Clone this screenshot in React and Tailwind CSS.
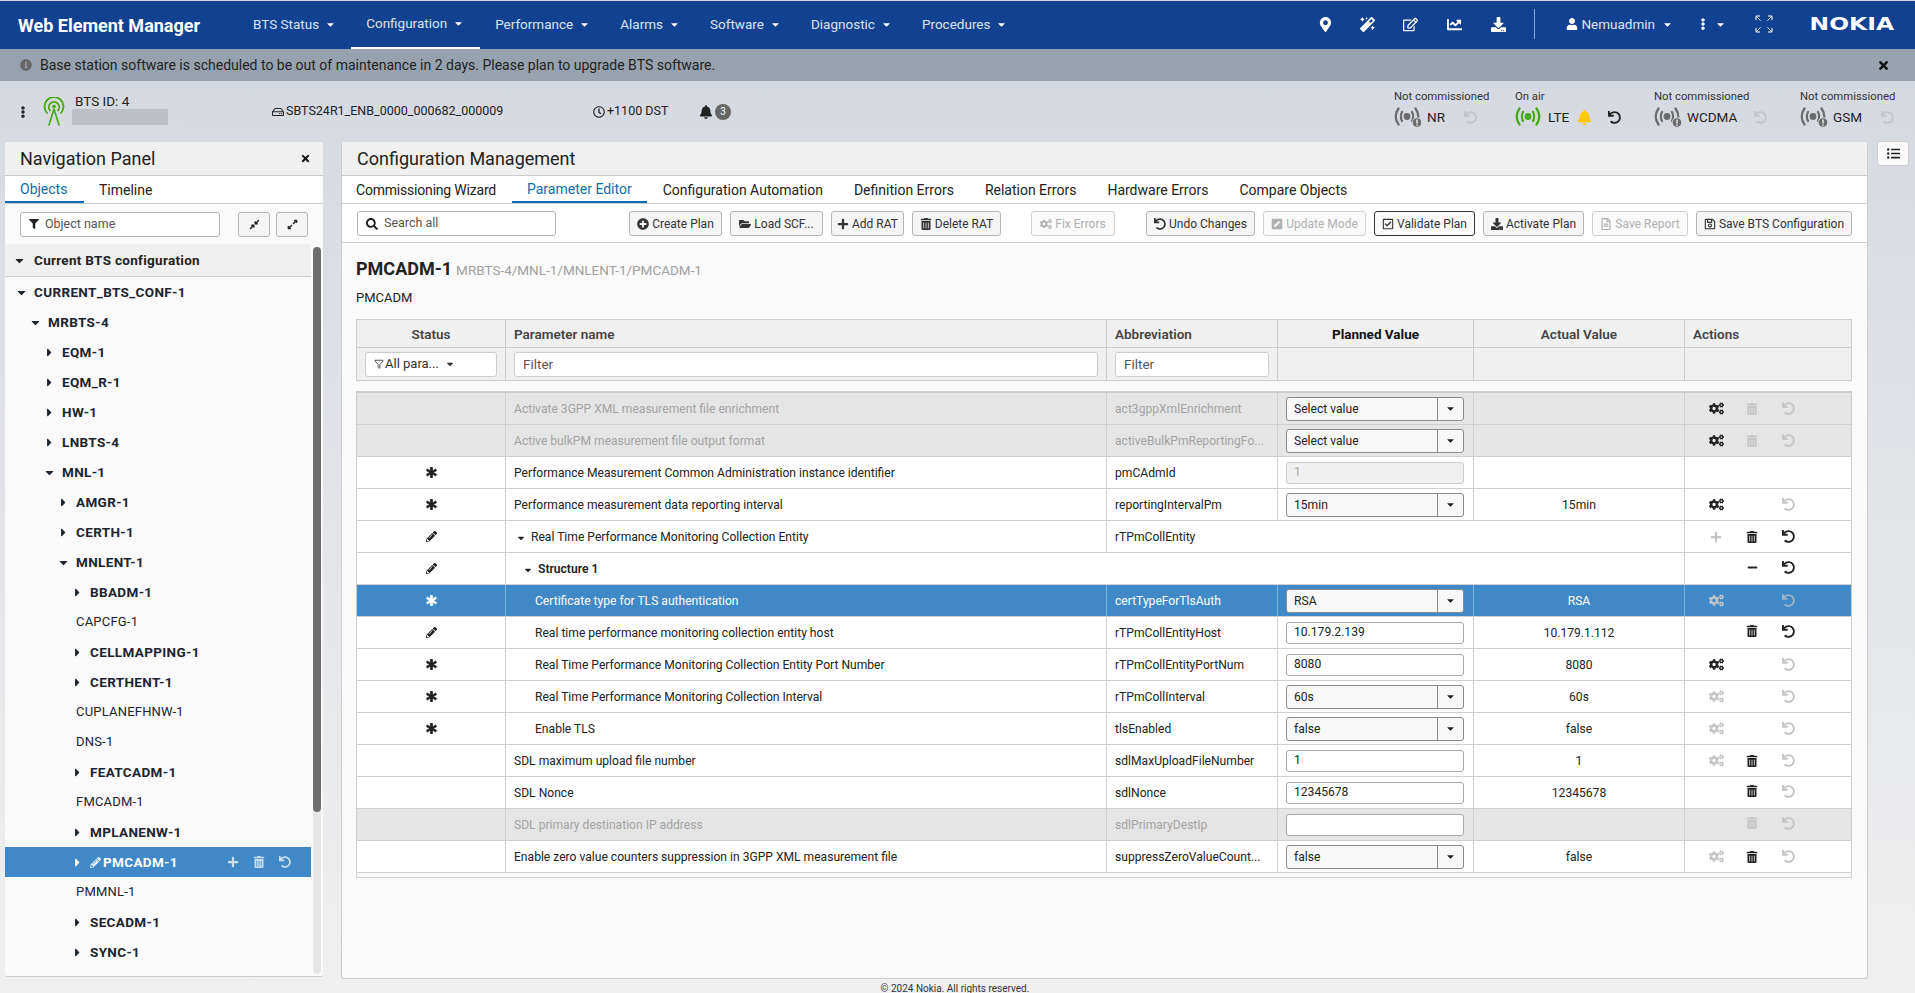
import {
  FaAsterisk, FaBell, FaCaretDown, FaCaretRight, FaChartLine, FaCogs, FaCompressAlt, FaDownload,
  FaEllipsisV, FaExpandAlt, FaFilter, FaFolderOpen, FaInfoCircle, FaListUl, FaMagic, FaMapMarkerAlt,
  FaMinus, FaPenSquare, FaPencilAlt, FaPlus, FaPlusCircle, FaRegCheckSquare, FaRegClock, FaRegEdit,
  FaRegFileAlt, FaRegHdd, FaRegSave, FaSearch, FaTimes, FaTrashAlt, FaUndo, FaUser,
} from 'react-icons/fa'
import { Filter } from 'lucide-react'

const NAV = [
  ['BTS Status', 'pl-[16px] pr-[15px]'],
  ['Configuration', 'pl-[15px] pr-[16px]', true],
  ['Performance', 'pl-[15px] pr-[15px]'],
  ['Alarms', 'pl-[15px] pr-[15px]'],
  ['Software', 'pl-[15px] pr-[15px]'],
  ['Diagnostic', 'pl-[15px] pr-[15px]'],
  ['Procedures', 'pl-[15px] pr-[15px]'],
]

const TREE = [
  [0, 'CURRENT_BTS_CONF-1', 'open'],
  [1, 'MRBTS-4', 'open'],
  [2, 'EQM-1', 'closed'],
  [2, 'EQM_R-1', 'closed'],
  [2, 'HW-1', 'closed'],
  [2, 'LNBTS-4', 'closed'],
  [2, 'MNL-1', 'open'],
  [3, 'AMGR-1', 'closed'],
  [3, 'CERTH-1', 'closed'],
  [3, 'MNLENT-1', 'open'],
  [4, 'BBADM-1', 'closed'],
  [3, 'CAPCFG-1', 'leaf'],
  [4, 'CELLMAPPING-1', 'closed'],
  [4, 'CERTHENT-1', 'closed'],
  [3, 'CUPLANEFHNW-1', 'leaf'],
  [3, 'DNS-1', 'leaf'],
  [4, 'FEATCADM-1', 'closed'],
  [3, 'FMCADM-1', 'leaf'],
  [4, 'MPLANENW-1', 'closed'],
  [4, 'PMCADM-1', 'selected'],
  [3, 'PMMNL-1', 'leaf'],
  [4, 'SECADM-1', 'closed'],
  [4, 'SYNC-1', 'closed'],
  [4, 'TAC-1', 'closed'],
]

const TABS = ['Commissioning Wizard', 'Parameter Editor', 'Configuration Automation', 'Definition Errors', 'Relation Errors', 'Hardware Errors', 'Compare Objects']

// g/t/u = gears, trash, undo: 1 dark, 0 faded, null nothing
const ROWS = [
  { name: 'Activate 3GPP XML measurement file enrichment', abbr: 'act3gppXmlEnrichment', select: 'Select value', off: true, g: 1, t: 0, u: 0 },
  { name: 'Active bulkPM measurement file output format', abbr: 'activeBulkPmReportingFo...', select: 'Select value', off: true, g: 1, t: 0, u: 0 },
  { status: 'star', name: 'Performance Measurement Common Administration instance identifier', abbr: 'pmCAdmId', locked: '1' },
  { status: 'star', name: 'Performance measurement data reporting interval', abbr: 'reportingIntervalPm', select: '15min', actual: '15min', g: 1, u: 0 },
  { status: 'pen', name: 'Real Time Performance Monitoring Collection Entity', abbr: 'rTPmCollEntity', caret: 1, wide: 'abbr', plus: 0, t: 1, u: 1 },
  { status: 'pen', name: 'Structure 1', caret: 2, wide: 'name', minus: true, u: 1, lift: true },
  { status: 'star', name: 'Certificate type for TLS authentication', abbr: 'certTypeForTlsAuth', select: 'RSA', actual: 'RSA', nested: true, sel: true, g: 0, u: 0 },
  { status: 'pen', name: 'Real time performance monitoring collection entity host', abbr: 'rTPmCollEntityHost', input: '10.179.2.139', actual: '10.179.1.112', nested: true, t: 1, u: 1, lift: true },
  { status: 'star', name: 'Real Time Performance Monitoring Collection Entity Port Number', abbr: 'rTPmCollEntityPortNum', input: '8080', actual: '8080', nested: true, g: 1, u: 0 },
  { status: 'star', name: 'Real Time Performance Monitoring Collection Interval', abbr: 'rTPmCollInterval', select: '60s', actual: '60s', nested: true, g: 0, u: 0 },
  { status: 'star', name: 'Enable TLS', abbr: 'tlsEnabled', select: 'false', actual: 'false', nested: true, g: 0, u: 0 },
  { name: 'SDL maximum upload file number', abbr: 'sdlMaxUploadFileNumber', input: '1', actual: '1', g: 0, t: 1, u: 0 },
  { name: 'SDL Nonce', abbr: 'sdlNonce', input: '12345678', actual: '12345678', t: 1, u: 0, lift: true },
  { name: 'SDL primary destination IP address', abbr: 'sdlPrimaryDestIp', input: '', off: true, t: 0, u: 0, lift: true },
  { name: 'Enable zero value counters suppression in 3GPP XML measurement file', abbr: 'suppressZeroValueCount...', select: 'false', actual: 'false', g: 0, t: 1, u: 0 },
]

const GRID = 'grid grid-cols-[149px_601px_171px_196px_211px_167px]'

function SignalIcon({ green }) {
  const color = green ? '#45a80f' : '#6b6b6b'
  return (
    <svg width="28" height="22" viewBox="0 0 28 22" fill="none" stroke={color} strokeWidth="2.2" strokeLinecap="round">
      <path d="M4.5 2.5 C1 7.5 1 13.5 4.5 18.5" />
      <path d="M8 6 C6.5 9 6.5 12 8 15" />
      <circle cx="13" cy="10.5" r="3.4" fill={color} stroke="none" />
      <path d="M18 6 C19.5 9 19.5 12 18 15" />
      <path d="M21.5 2.5 C25 7.5 25 13.5 21.5 18.5" />
      {!green && <circle cx="23" cy="16.5" r="4.8" fill={color} stroke="#d4d8e0" strokeWidth="1" />}
      {!green && <path d="M23 14v3M23 19v.2" stroke="#fff" strokeWidth="1.3" />}
    </svg>
  )
}

function Antenna() {
  return (
    <svg width="22" height="30" viewBox="0 0 22 30" fill="none" stroke="#45a80f" strokeWidth="1.8" strokeLinecap="round">
      <path d="M4 16 A9.5 9.5 0 1 1 18 16" />
      <path d="M7 13.5 A5.2 5.2 0 1 1 15 13.5" />
      <circle cx="11" cy="9.5" r="1.8" fill="#45a80f" stroke="none" />
      <path d="M11 12 L6 28 M11 12 L16 28" strokeWidth="1.6" />
    </svg>
  )
}

function ExpandCorners() {
  return (
    <svg width="18" height="18" viewBox="0 0 18 18" fill="none" stroke="#fff" strokeWidth="1">
      <path d="M1 5V1h4M1 1l4.5 4.5" />
      <path d="M17 5V1h-4M17 1l-4.5 4.5" />
      <path d="M1 13v4h4M1 17l4.5-4.5" />
      <path d="M17 13v4h-4M17 17l-4.5-4.5" />
    </svg>
  )
}

function RatStatus({ label, rat, green, className, ratWidth, children }) {
  return (
    <div className={className}>
      <div className="text-[11.3px] leading-[16px] text-[#333]">{label}</div>
      <div className="flex items-center h-[22px] mt-[1px]">
        <SignalIcon green={green} />
        <span className={`text-[13.5px] text-[#222] ml-[5px] ${ratWidth}`}>{rat}</span>
        {children}
      </div>
    </div>
  )
}

function ToolButton({ icon: Icon, label, width, disabled, active }) {
  let tone = 'bg-[#f5f5f5] border-[#b5b5b5] text-[#333]'
  if (disabled) tone = 'bg-[#fafafa] border-[#d0d0d0] text-[#b0b0b0]'
  if (active) tone = 'bg-[#fafafa] border-[#333] text-[#333]'
  return (
    <button className={`h-[25px] rounded-[3px] border text-[12px] flex items-center justify-center gap-[3px] whitespace-nowrap shrink-0 ${width} ${tone}`}>
      <Icon className="text-[12px]" />
      {label}
    </button>
  )
}

function TreeRow({ level, label, kind }) {
  const selected = kind === 'selected'
  const leaf = kind === 'leaf'
  const pad = ['pl-[12px]', 'pl-[26px]', 'pl-[40px]', 'pl-[54px]', 'pl-[68px]'][level]
  return (
    <div className={`h-[30px] shrink-0 flex items-center ${pad} ${selected ? 'bg-[#4088c8] text-white' : 'text-[#1c2430]'} ${leaf ? 'text-[13px] tracking-[0.2px]' : 'text-[13.5px] tracking-[0.35px] font-bold'}`}>
      <span className="w-[17px] shrink-0 flex">
        {kind === 'open' && <FaCaretDown className="text-[13px] -ml-[2px]" />}
        {(kind === 'closed' || selected) && <FaCaretRight className="text-[13px] -ml-[2px]" />}
      </span>
      {selected && <FaPencilAlt className="text-[11px] mr-[2px] text-[#e4eef7]" />}
      <span>{label}</span>
      {selected && (
        <span className="ml-auto flex items-center gap-[14px] pr-[20px] text-[#c9ddef] text-[12px]">
          <FaPlus />
          <FaTrashAlt />
          <FaUndo />
        </span>
      )}
    </div>
  )
}

function ActionIcon({ icon: Icon, on, size }) {
  return (
    <span className="w-[36px] flex justify-center">
      {on !== undefined && <Icon className={`${size} ${on ? 'text-[#222]' : 'text-[#c4c4c4]'}`} />}
    </span>
  )
}

function PlannedCell({ row }) {
  if (row.select) {
    return (
      <div className="w-full h-[24px] rounded-[3px] border border-[#8a8a8a] bg-[#f8f8f8] flex items-center text-[12.1px] text-[#222]">
        <span className="flex-1 pl-[7px] pt-[2px]">{row.select}</span>
        <span className="w-[26px] h-full border-l border-[#8a8a8a] flex items-center justify-center">
          <FaCaretDown className="text-[11px]" />
        </span>
      </div>
    )
  }
  if (row.locked) {
    return <div className="w-full h-[22px] rounded-[3px] border border-[#ccc] bg-[#f0f0f0] pl-[7px] flex items-center text-[12.1px] text-[#aaa]">{row.locked}</div>
  }
  return <div className="w-full h-[22px] rounded-[3px] border border-[#a8a8a8] bg-white pl-[7px] flex items-center text-[12.1px] text-[#222]">{row.input}</div>
}

function TableRow({ row }) {
  const line = row.sel ? 'border-[#7fb0da]' : 'border-[#d0d0d0]'
  const cell = `h-full border-r ${line} flex items-center min-w-0`
  let bg = 'bg-white text-[#222]'
  if (row.off) bg = 'bg-[#e5e5e5] text-[#a3a3a3]'
  if (row.sel) bg = 'bg-[#4088c8] text-white'
  const namePad = row.nested ? 'pl-[29px]' : row.caret === 2 ? 'pl-[15px]' : 'pl-[8px]'
  const statusTone = row.sel ? 'text-white' : 'text-[#222]'
  return (
    <div className={`${GRID} h-[32px] border-b border-[#d0d0d0] text-[12.1px] ${bg}`}>
      <div className={`${cell} justify-center`}>
        {row.status === 'star' && <FaAsterisk className={`text-[11px] stroke-current stroke-[40] ${statusTone}`} />}
        {row.status === 'pen' && <FaPencilAlt className={`text-[11px] ${statusTone}`} />}
      </div>
      <div className={`${cell} pt-[2px] ${namePad} ${row.wide === 'name' ? 'col-span-4' : ''} ${row.caret === 2 ? 'font-semibold' : ''}`}>
        {row.caret && <FaCaretDown className="text-[10px] mr-[5px] ml-[2px]" />}
        <span className="whitespace-nowrap">{row.name}</span>
      </div>
      {row.wide !== 'name' && (
        <div className={`${cell} pt-[2px] pl-[8px] whitespace-nowrap ${row.wide === 'abbr' ? 'col-span-3' : ''}`}>{row.abbr}</div>
      )}
      {!row.wide && (
        <div className={`${cell} pl-[8px] pr-[9px]`}>
          <PlannedCell row={row} />
        </div>
      )}
      {!row.wide && <div className={`${cell} pt-[2px] justify-center`}>{row.actual}</div>}
      <div className={`h-full flex items-center pl-[13px] ${row.lift ? 'pb-[3px]' : ''}`}>
        {row.minus ? (
          <>
            <span className="w-[36px]" />
            <ActionIcon icon={FaMinus} on={1} size="text-[11px]" />
          </>
        ) : row.plus !== undefined ? (
          <ActionIcon icon={FaPlus} on={row.plus} size="text-[12px]" />
        ) : (
          <ActionIcon icon={FaCogs} on={row.g} size="text-[15px]" />
        )}
        {!row.minus && <ActionIcon icon={FaTrashAlt} on={row.t} size="text-[12px]" />}
        <ActionIcon icon={FaUndo} on={row.u} size={`text-[13px] ${row.sel ? 'opacity-70' : ''}`} />
      </div>
    </div>
  )
}

export default function App() {
  return (
    <div className="h-screen overflow-hidden flex flex-col bg-linear-to-b from-[#d3d7df] to-[#f0f0f0] font-['Roboto',sans-serif] text-[#222]">
      {/* top bar */}
      <header className="h-[48px] mt-px shrink-0 bg-[#124191] text-white flex items-stretch">
        <div className="w-[237px] pl-[18px] flex items-center text-[18px] font-bold">Web Element Manager</div>
        <nav className="flex items-stretch">
          {NAV.map(([label, pad, active]) => (
            <div key={label} className={`flex items-center gap-[6px] text-[13.5px] text-[#dbe4f2] pb-[2px] ${pad} ${active ? 'border-b-2 border-white' : ''}`}>
              {label}
              <FaCaretDown className="text-[11px] text-white" />
            </div>
          ))}
        </nav>
        <div className="ml-auto flex items-center text-[15px] pb-[2px]">
          <FaMapMarkerAlt className="mr-[27px]" />
          <FaMagic className="mr-[28px]" />
          <FaRegEdit className="mr-[29px]" />
          <FaChartLine className="mr-[29px]" />
          <FaDownload className="mr-[28px]" />
          <span className="w-px h-[30px] bg-[#8aa4cf] mr-[31px]" />
          <FaUser className="text-[12px] mr-[3px]" />
          <span className="text-[13.5px] text-[#dbe4f2]">Nemuadmin</span>
          <FaCaretDown className="text-[11px] ml-[7px] mr-[24px]" />
          <FaEllipsisV className="text-[12px]" />
          <FaCaretDown className="text-[11px] ml-[6px] mr-[29px]" />
          <ExpandCorners />
          <span className="w-[65px] ml-[56px] mr-[21px] origin-right scale-x-[1.3] whitespace-nowrap font-['DejaVu_Sans',sans-serif] text-[18px] font-bold leading-none text-right">NOKIA</span>
        </div>
      </header>

      {/* maintenance notice */}
      <div className="h-[32px] shrink-0 bg-[#98a2ae] flex items-center pl-[20px] pr-[25px] text-[14px] text-[#222]">
        <FaInfoCircle className="text-[12px] text-[#666] mr-[8px]" />
        <span>Base station software is scheduled to be out of maintenance in 2 days. Please plan to upgrade BTS software.</span>
        <FaTimes className="ml-auto text-[13px] text-[#111]" />
      </div>

      {/* BTS info */}
      <div className="h-[61px] shrink-0 flex items-center pl-[17px]">
        <FaEllipsisV className="text-[12px] text-[#222] mr-[14px]" />
        <Antenna />
        <div className="ml-[10px] w-[197px] pt-[3px]">
          <div className="text-[13.5px] leading-[16px]">BTS ID: 4</div>
          <div className="w-[96px] h-[16px] bg-[#bdbfc7] -ml-[3px]" />
          <div className="w-[108px] h-[8px] bg-[#d9dbe1] -ml-[3px]" />
        </div>
        <FaRegHdd className="text-[12px] mr-[2px]" />
        <span className="text-[12.5px] w-[307px]">SBTS24R1_ENB_0000_000682_000009</span>
        <FaRegClock className="text-[12px] mr-[2px]" />
        <span className="text-[12.5px] w-[92px]">+1100 DST</span>
        <FaBell className="text-[14px]" />
        <span className="ml-[2px] w-[16px] h-[16px] rounded-full bg-[#666] text-white text-[10px] flex items-center justify-center">3</span>
        <div className="ml-auto flex -mt-[6px]">
          <RatStatus label="Not commissioned" rat="NR" className="w-[121px]" ratWidth="w-[37px]">
            <FaUndo className="text-[13px] text-[#c4c6ca]" />
          </RatStatus>
          <RatStatus label="On air" rat="LTE" green className="w-[139px]" ratWidth="w-[29px]">
            <FaBell className="text-[15px] text-[#ffc800]" />
            <FaUndo className="text-[13px] text-[#222] ml-[16px]" />
          </RatStatus>
          <RatStatus label="Not commissioned" rat="WCDMA" className="w-[146px]" ratWidth="w-[67px]">
            <FaUndo className="text-[13px] text-[#c4c6ca]" />
          </RatStatus>
          <RatStatus label="Not commissioned" rat="GSM" className="w-[115px]" ratWidth="w-[48px]">
            <FaUndo className="text-[13px] text-[#c4c6ca]" />
          </RatStatus>
        </div>
      </div>

      <div className="flex-1 min-h-0 flex items-start pl-[5px]">
        {/* navigation panel */}
        <aside className="w-[318px] h-[835px] shrink-0 bg-[#fafafa] rounded-[3px] flex flex-col overflow-hidden border-b border-[#ccc]">
          <div className="h-[34px] shrink-0 bg-[#f0f0f0] border-b border-[#ccc] flex items-center justify-between pl-[15px] pr-[12px]">
            <span className="text-[18px]">Navigation Panel</span>
            <FaTimes className="text-[11px] text-[#111]" />
          </div>
          <div className="h-[28px] shrink-0 bg-white border-b border-[#ccc] flex text-[14px]">
            <div className="w-[79px] pl-[15px] pt-[1px] flex items-center text-[#0f6cb6] border-b-2 border-[#0f6cb6]">Objects</div>
            <div className="pl-[15px] pt-[1px] flex items-center">Timeline</div>
          </div>
          <div className="h-[40px] shrink-0 flex items-center pl-[15px]">
            <div className="w-[200px] h-[25px] bg-white rounded-[3px] border border-[#b5b5b5] flex items-center pl-[8px] text-[12.5px] text-[#555]">
              <FaFilter className="text-[10px] text-[#222] mr-[6px]" />
              Object name
            </div>
            <button className="w-[32px] h-[25px] ml-[18px] bg-[#f5f5f5] rounded-[3px] border border-[#b5b5b5] flex items-center justify-center">
              <FaCompressAlt className="text-[11px]" />
            </button>
            <button className="w-[32px] h-[25px] ml-[6px] bg-[#f5f5f5] rounded-[3px] border border-[#b5b5b5] flex items-center justify-center">
              <FaExpandAlt className="text-[11px]" />
            </button>
          </div>
          <div className="flex-1 min-h-0 flex">
            <div className="w-[306px] shrink-0 flex flex-col overflow-hidden">
              <div className="h-[33px] shrink-0 bg-[#f0f0f0] border-b border-[#ccc] flex items-center pl-[8px] text-[13.5px] font-bold tracking-[0.3px]">
                <FaCaretDown className="text-[13px] mr-[8px]" />
                Current BTS configuration
              </div>
              {TREE.map(([level, label, kind]) => (
                <TreeRow key={label} level={level} label={label} kind={kind} />
              ))}
            </div>
            <div className="w-[8px] ml-[2px] mt-[3px] mb-[2px] bg-[#e6e6e6] rounded-full">
              <div className="h-[565px] bg-[#6e6e6e] rounded-full" />
            </div>
          </div>
        </aside>

        {/* configuration management */}
        <main className="w-[1527px] h-[837px] ml-[18px] shrink-0 bg-[#fafafa] border-r border-b border-l border-[#ccc] rounded-[3px] flex flex-col">
          <div className="h-[34px] shrink-0 bg-[#f0f0f0] border-b border-[#ccc] flex items-center pl-[15px] text-[18px]">Configuration Management</div>
          <div className="h-[28px] shrink-0 bg-white border-b border-[#ccc] flex text-[14px]">
            {TABS.map((tab) => (
              <div key={tab} className={`px-[15.5px] pt-[2px] flex items-center ${tab === 'Parameter Editor' ? 'text-[#0f6cb6] border-b-2 border-[#0f6cb6]' : ''} ${tab === 'Commissioning Wizard' ? 'tracking-[-0.2px] pl-[14px]' : ''}`}>{tab}</div>
            ))}
          </div>
          <div className="h-[39px] shrink-0 bg-white border-b border-[#ccc] flex items-center pl-[15px] pt-[1px] gap-[8px]">
            <div className="w-[199px] h-[25px] mr-[65px] shrink-0 bg-white rounded-[3px] border border-[#b5b5b5] flex items-center pl-[8px] text-[12.5px] text-[#555]">
              <FaSearch className="text-[12px] text-[#222] mr-[6px]" />
              Search all
            </div>
            <ToolButton icon={FaPlusCircle} label="Create Plan" width="w-[93px]" />
            <ToolButton icon={FaFolderOpen} label="Load SCF..." width="w-[93px]" />
            <ToolButton icon={FaPlus} label="Add RAT" width="w-[73px]" />
            <ToolButton icon={FaTrashAlt} label="Delete RAT" width="w-[89px] mr-[22px]" />
            <ToolButton icon={FaCogs} label="Fix Errors" width="w-[84px] mr-[23px]" disabled />
            <ToolButton icon={FaUndo} label="Undo Changes" width="w-[109px]" />
            <ToolButton icon={FaPenSquare} label="Update Mode" width="w-[103px]" disabled />
            <ToolButton icon={FaRegCheckSquare} label="Validate Plan" width="w-[101px]" active />
            <ToolButton icon={FaDownload} label="Activate Plan" width="w-[101px]" />
            <ToolButton icon={FaRegFileAlt} label="Save Report" width="w-[96px]" disabled />
            <ToolButton icon={FaRegSave} label="Save BTS Configuration" width="w-[156px]" />
          </div>

          <div className="flex-1 min-h-0 pl-[14px]">
            <div className="h-[76px] pt-[12px]">
              <div className="flex items-baseline">
                <span className="text-[18px] font-bold text-[#222]">PMCADM-1</span>
                <span className="ml-[4px] text-[13.5px] text-[#a0a0a0]">MRBTS-4/MNL-1/MNLENT-1/PMCADM-1</span>
              </div>
              <div className="text-[13px] mt-[6px]">PMCADM</div>
            </div>

            <div className="w-[1496px] border border-[#ccc] bg-[#f0f0f0] text-[13.5px] font-semibold text-[#444]">
              <div className={`${GRID} h-[28px] border-b border-[#ccc] pt-0`}>
                <div className="border-r border-[#ccc] pt-[2px] flex items-center justify-center">Status</div>
                <div className="border-r border-[#ccc] pt-[2px] flex items-center pl-[8px]">Parameter name</div>
                <div className="border-r border-[#ccc] pt-[2px] flex items-center pl-[8px]">Abbreviation</div>
                <div className="border-r border-[#ccc] pt-[2px] flex items-center justify-center font-bold text-[#111]">Planned Value</div>
                <div className="border-r border-[#ccc] pt-[2px] flex items-center justify-center">Actual Value</div>
                <div className="flex pt-[2px] items-center pl-[8px]">Actions</div>
              </div>
              <div className={`${GRID} h-[32px] font-normal text-[#555]`}>
                <div className="border-r border-[#ccc] flex items-center px-[8px]">
                  <div className="w-full h-[25px] bg-white rounded-[3px] border border-[#ccc] flex items-center pl-[8px] text-[13px] text-[#333]">
                    <Filter size={10} className="mr-[1px]" />
                    All para...
                    <FaCaretDown className="text-[10px] ml-[6px]" />
                  </div>
                </div>
                <div className="border-r border-[#ccc] flex items-center px-[8px]">
                  <div className="w-full h-[25px] bg-white rounded-[3px] border border-[#ccc] flex items-center pl-[8px]">Filter</div>
                </div>
                <div className="border-r border-[#ccc] flex items-center px-[8px]">
                  <div className="w-full h-[25px] bg-white rounded-[3px] border border-[#ccc] flex items-center pl-[8px]">Filter</div>
                </div>
                <div className="border-r border-[#ccc]" />
                <div className="border-r border-[#ccc]" />
                <div />
              </div>
            </div>

            <div className="w-[1496px] mt-[10px] border-x border-b border-t-2 border-[#ccc] pb-[4px] bg-[#fafafa]">
              {ROWS.map((row) => (
                <TableRow key={row.name} row={row} />
              ))}
            </div>
          </div>
        </main>

        <button className="w-[32px] h-[25px] ml-[9px] -mt-px shrink-0 bg-[#fafafa] rounded-[3px] border border-[#ccc] flex items-center justify-center">
          <FaListUl className="text-[13px] text-[#222]" />
        </button>
      </div>

      <footer className="h-[14px] shrink-0 pr-[5px] text-center text-[10px] text-[#333] leading-[20px]">© 2024 Nokia. All rights reserved.</footer>
    </div>
  )
}
